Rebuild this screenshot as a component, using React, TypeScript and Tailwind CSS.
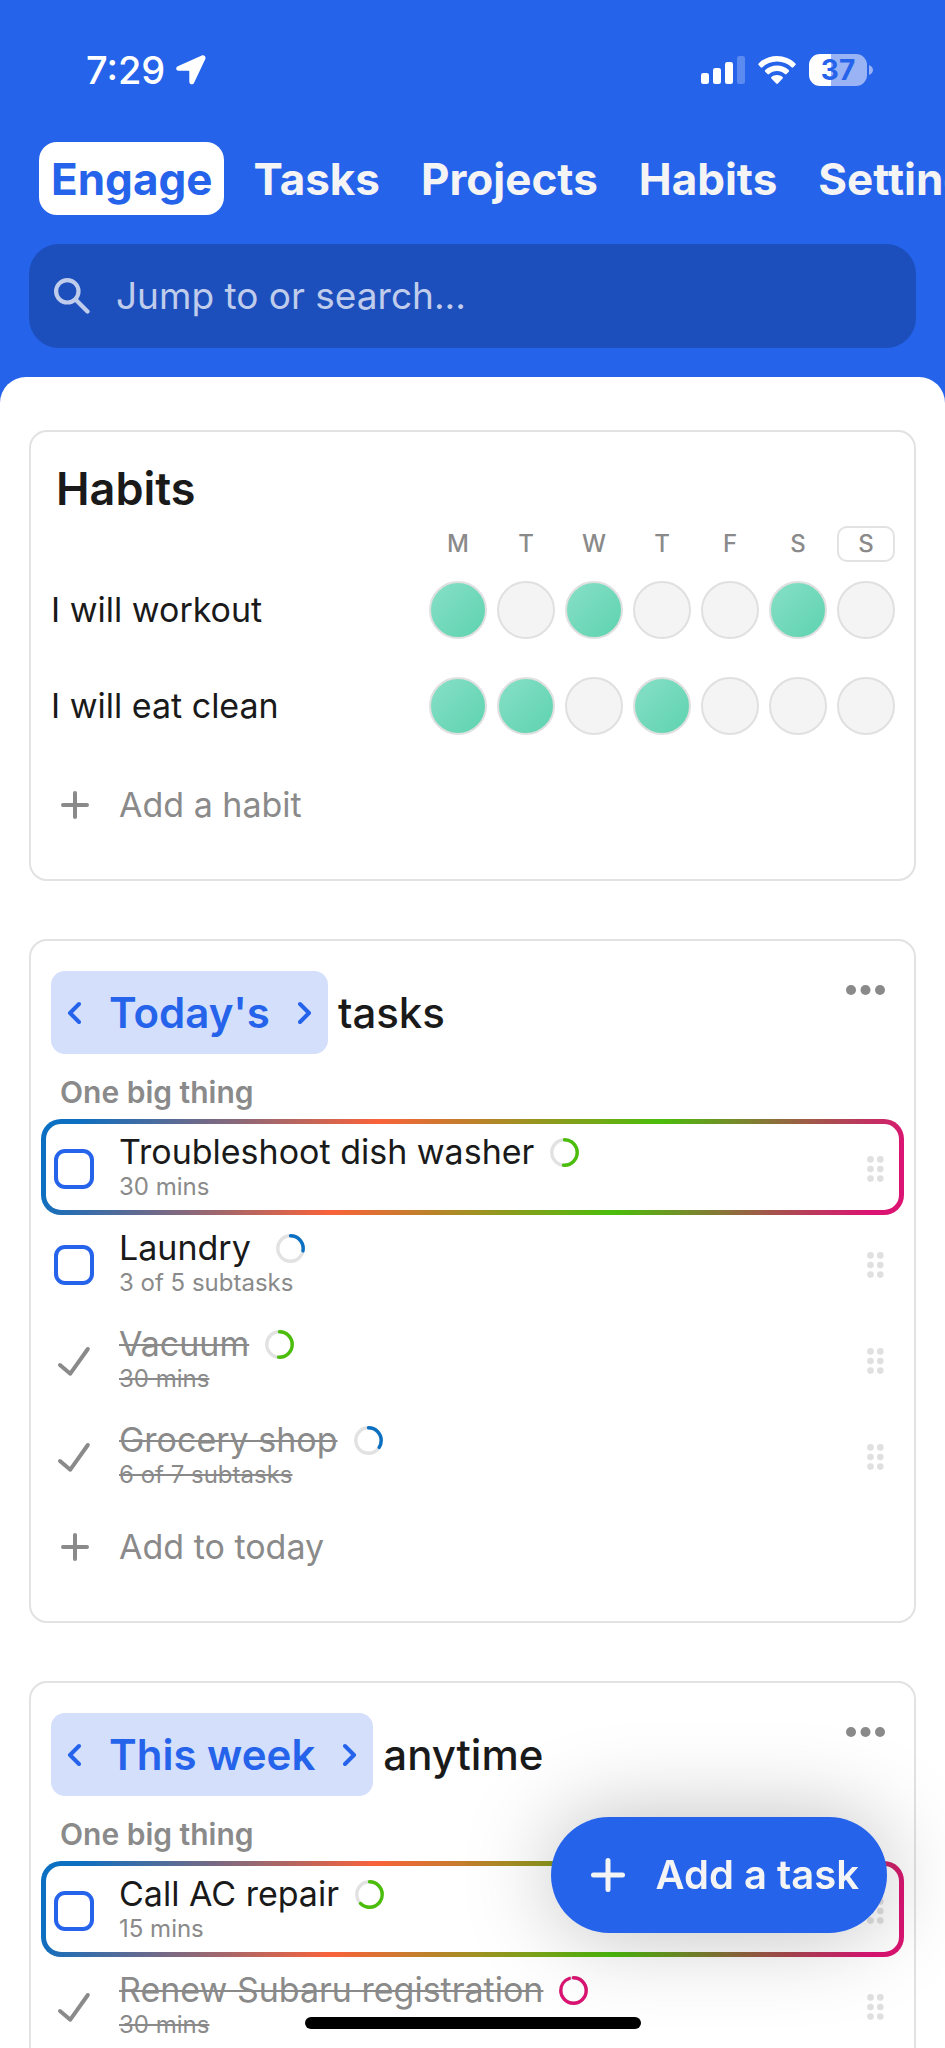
import { useId, useState } from "react";

type Task = {
  title: string;
  note: string;
  done?: boolean;
  progress: number;
  tone: "green" | "blue" | "pink";
};

type Habit = { name: string; days: boolean[] };

const NAV = ["Engage", "Tasks", "Projects", "Habits", "Settings"];
const DAYS = ["M", "T", "W", "T", "F", "S", "S"];
const TODAY_INDEX = 6;

const HABITS: Habit[] = [
  { name: "I will workout", days: [true, false, true, false, false, true, false] },
  { name: "I will eat clean", days: [true, true, false, true, false, false, false] },
];

const TODAY_TASKS: Task[] = [
  { title: "Troubleshoot dish washer", note: "30 mins", progress: 0.51, tone: "green" },
  { title: "Laundry ", note: "3 of 5 subtasks", progress: 0.28, tone: "blue" },
  { title: "Vacuum", note: "30 mins", done: true, progress: 0.51, tone: "green" },
  { title: "Grocery shop", note: "6 of 7 subtasks", done: true, progress: 0.34, tone: "blue" },
];

const WEEK_TASKS: Task[] = [
  { title: "Call AC repair", note: "15 mins", progress: 0.62, tone: "green" },
  { title: "Renew Subaru registration", note: "30 mins", done: true, progress: 0.94, tone: "pink" },
];

const RING_TONES = { green: "#4bbd0b", blue: "#0b6fc2", pink: "#db1473" };

function StatusBar() {
  return (
    <div className="flex h-10 items-center justify-between pr-[72px] pl-[86px] text-white">
      <div className="flex items-center gap-[11px]">
        <span className="text-[38px] leading-10 font-medium">7:29</span>
        <svg width="30" height="30" viewBox="0 0 30 30" fill="currentColor" aria-label="Location in use">
          <path d="M25.8 0.6L1.8 11.3C-0.7 12.5 -0.1 15.7 2.4 15.7H12.5C13 15.7 13.3 16 13.3 16.5V26.7C13.3 29.6 17 30.3 18.1 27.8L29.2 4.3C30.3 1.9 28.2 -0.5 25.8 0.6Z" />
        </svg>
      </div>
      <div className="flex items-center">
        <svg width="44" height="28" viewBox="0 0 44 28" fill="currentColor" aria-label="Signal">
          <rect x="0" y="17" width="8" height="11" rx="2.3" />
          <rect x="12" y="12" width="8" height="16" rx="2.3" />
          <rect x="24" y="6" width="8" height="22" rx="2.3" />
          <rect x="36" y="0" width="8" height="28" rx="2.3" opacity=".25" />
        </svg>
        <svg className="ml-[13px]" width="38" height="28" viewBox="0 0 38 28" fill="currentColor" aria-label="Wi-Fi">
          <path d="M19 0C11.8 0 5.3 2.8.6 7.4c-.5.5-.5 1.2 0 1.7l2.1 2.2c.5.5 1.2.5 1.7 0C8.2 7.7 13.3 5.6 19 5.6s10.8 2.1 14.6 5.7c.5.5 1.2.5 1.7 0l2.1-2.2c.5-.5.5-1.2 0-1.7C32.7 2.8 26.2 0 19 0Z" />
          <path d="M19 9.5c-4.5 0-8.6 1.7-11.7 4.5-.5.5-.5 1.2-.1 1.7l2.3 2.3c.5.5 1.1.5 1.6.1 2.1-1.9 4.9-3 7.9-3s5.8 1.1 7.9 3c.5.4 1.1.4 1.6-.1l2.3-2.3c.4-.5.4-1.2-.1-1.7-3.1-2.8-7.2-4.5-11.7-4.5Z" />
          <path d="M19 19c-2.1 0-4 .7-5.5 1.9-.5.4-.5 1.1-.1 1.6l4.8 5c.5.5 1.2.5 1.7 0l4.7-5c.5-.5.4-1.2-.1-1.6C23 19.700 21.1 19 19 19Z" />
        </svg>
        <div className="ml-[13px] flex h-8 w-[58px] items-center justify-center rounded-[11px] bg-[linear-gradient(90deg,#fff_0_38%,#9ab3f5_38%)] text-[28px] leading-8 font-bold text-[#2563eb]">
          37
        </div>
        <svg className="ml-[2px]" width="4" height="10" viewBox="0 0 4 10" fill="#9ab3f5" aria-hidden="true">
          <path d="M0 0c2.500 1 4 2.800 4 5s-1.500 4-4 5Z" />
        </svg>
      </div>
    </div>
  );
}

function PlusIcon({ size, stroke }: { size: number; stroke: number }) {
  return (
    <svg width={size} height={size} viewBox={`0 0 ${size} ${size}`} stroke="currentColor" strokeWidth={stroke} strokeLinecap="round" aria-hidden="true">
      <path d={`M${size / 2} ${stroke / 2}V${size - stroke / 2}M${stroke / 2} ${size / 2}H${size - stroke / 2}`} />
    </svg>
  );
}

function Chevron({ direction }: { direction: "left" | "right" }) {
  return (
    <svg width="14" height="24" viewBox="0 0 14 24" fill="none" stroke="currentColor" strokeWidth="4" strokeLinecap="round" strokeLinejoin="round" aria-hidden="true">
      <path d={direction === "left" ? "M12 3 3 12l9 9" : "m2 3 9 9-9 9"} />
    </svg>
  );
}

function Ring({ progress, tone }: { progress: number; tone: Task["tone"] }) {
  const length = 2 * Math.PI * 12.7;
  return (
    <svg className="shrink-0" width="29" height="29" viewBox="0 0 29 29" fill="none" strokeWidth="3.4" aria-hidden="true">
      <circle cx="14.5" cy="14.5" r="12.7" stroke="#e2e2e2" />
      <circle
        cx="14.5"
        cy="14.5"
        r="12.7"
        stroke={RING_TONES[tone]}
        strokeLinecap="round"
        strokeDasharray={`${length * progress} ${length}`}
        transform="rotate(-90 14.5 14.5)"
      />
    </svg>
  );
}

function DragHandle() {
  return (
    <svg width="17" height="26" viewBox="0 0 17 26" fill="#e0e0e0" aria-hidden="true">
      {[3.4, 13, 22.6].map((y) => (
        <g key={y}>
          <circle cx="3.5" cy={y} r="3.3" />
          <circle cx="13.3" cy={y} r="3.3" />
        </g>
      ))}
    </svg>
  );
}

function AddRow({ label }: { label: string }) {
  return (
    <button type="button" className="flex h-[88px] w-full items-center gap-[30px] pl-[30px] text-[34px] leading-10 text-[#8a8a8a]">
      <PlusIcon size={28} stroke={4} />
      {label}
    </button>
  );
}

function HabitsCard() {
  const [habits, setHabits] = useState(HABITS);
  const toggle = (row: number, day: number) =>
    setHabits((all) =>
      all.map((h, i) => (i === row ? { ...h, days: h.days.map((d, j) => (j === day ? !d : d)) } : h)),
    );
  return (
    <section className="rounded-[18px] border-2 border-[#e2e2e2] bg-white pt-6 pb-[30px]">
      <h2 className="mb-1 pl-[25px] text-[45px] leading-[66px] font-semibold">Habits</h2>
      <div className="mb-[7px] pr-[14px] pl-5">
        <table className="w-full table-fixed border-collapse">
          <thead>
            <tr className="h-[35px]">
              <td className="p-0" />
              {DAYS.map((day, i) => (
                <th key={i} scope="col" className="w-[68px] p-0 text-2xl font-medium text-[#8a8a8a]">
                  <span
                    className={
                      i === TODAY_INDEX
                        ? "mx-auto flex h-9 w-[58px] items-center justify-center rounded-[10px] border-2 border-[#e2e2e2]"
                        : "flex h-9 items-center justify-center"
                    }
                  >
                    {day}
                  </span>
                </th>
              ))}
            </tr>
          </thead>
          <tbody>
            {habits.map((habit, row) => (
              <tr key={habit.name} className="h-24">
                <th scope="row" className="p-0 text-left text-[34px] leading-10 font-normal">
                  {habit.name}
                </th>
                {habit.days.map((on, day) => (
                  <td key={day} className="p-0">
                    <input
                      type="checkbox"
                      checked={on}
                      onChange={() => toggle(row, day)}
                      aria-label={`${habit.name}, day ${day + 1}`}
                      className="mx-auto block size-[58px] appearance-none rounded-full border-2 border-[#e0e0e0] bg-[#f4f4f4] checked:bg-linear-to-br checked:from-[#86dfc6] checked:to-[#5dd3b0]"
                    />
                  </td>
                ))}
              </tr>
            ))}
          </tbody>
        </table>
      </div>
      <AddRow label="Add a habit" />
    </section>
  );
}

function TaskRow({ task, featured }: { task: Task; featured?: boolean }) {
  const id = useId();
  const [done, setDone] = useState(!!task.done);
  return (
    <li
      className={
        featured
          ? "h-24 rounded-[20px] bg-[linear-gradient(117deg,#0b6fc2_4%,#f9623a_37%,#4bbd0b_68%,#db1473_96%)] p-[5px]"
          : "h-24 p-[5px]"
      }
    >
      <div className="flex h-full items-center rounded-[15px] bg-white pt-[3px] pr-[15px] pl-2">
        <span className="grid size-10 shrink-0 place-items-center">
          <input
            id={id}
            type="checkbox"
            checked={done}
            onChange={() => setDone(!done)}
            className="col-start-1 row-start-1 size-10 appearance-none rounded-[11px] border-4 border-[#2563eb] checked:border-transparent"
          />
          {done && (
            <svg className="pointer-events-none col-start-1 row-start-1" width="40" height="40" viewBox="0 0 40 40" fill="none" stroke="#8a8a8a" strokeWidth="4" strokeLinecap="round" strokeLinejoin="round" aria-hidden="true">
              <path d="M6 24L16.3 32.7L33.8 8" />
            </svg>
          )}
        </span>
        <label htmlFor={id} className="ml-[25px] min-w-0 flex-1 pb-[3px]">
          <span className="flex items-center gap-4">
            <span
              className={
                done
                  ? "text-[34px] leading-10 whitespace-pre text-[#8a8a8a] line-through decoration-2"
                  : "text-[34px] leading-10 whitespace-pre"
              }
            >
              {task.title}
            </span>
            <Ring progress={task.progress} tone={task.tone} />
          </span>
          <span
            className={
              done
                ? "block text-2xl leading-[30px] text-[#8a8a8a] line-through decoration-2"
                : "block text-2xl leading-[30px] text-[#8a8a8a]"
            }
          >
            {task.note}
          </span>
        </label>
        <DragHandle />
      </div>
    </li>
  );
}

function TasksCard({ period, kind, tasks, addLabel }: { period: string; kind: string; tasks: Task[]; addLabel: string }) {
  return (
    <section className="rounded-[18px] border-2 border-[#e2e2e2] bg-white pt-[30px] pb-[30px]">
      <header className="flex items-start pr-7 pl-5">
        <h2 className="flex items-center gap-[10px] text-[42px] leading-[50px] font-medium">
          <span className="flex h-[83px] items-center rounded-[14px] bg-[#d4dffc] px-4 font-semibold text-[#2563eb]">
            <button type="button" aria-label="Previous period">
              <Chevron direction="left" />
            </button>
            <span className="px-7">{period}</span>
            <button type="button" aria-label="Next period">
              <Chevron direction="right" />
            </button>
          </span>
          {kind}
        </h2>
        <button type="button" aria-label="More options" className="mt-[14px] ml-auto">
          <svg width="40" height="10" viewBox="0 0 40 10" fill="#8a8a8a" aria-hidden="true">
            <circle cx="5" cy="5" r="5" />
            <circle cx="19.5" cy="5" r="5" />
            <circle cx="34" cy="5" r="5" />
          </svg>
        </button>
      </header>
      <h3 className="mt-5 mb-[9px] pl-[29px] text-[30px] leading-9 font-semibold text-[#8a8a8a]">One big thing</h3>
      <ul className="px-[10px]">
        {tasks.map((task, i) => (
          <TaskRow key={task.title} task={task} featured={i === 0} />
        ))}
      </ul>
      <AddRow label={addLabel} />
    </section>
  );
}

export default function App() {
  const [active, setActive] = useState("Engage");
  return (
    <div className="flex h-screen flex-col overflow-hidden bg-[#2563eb] font-[Inter,sans-serif] text-[#1a1a1a]">
      <header className="shrink-0 pt-[50px] pb-[29px]">
        <StatusBar />
        <nav className="mt-[52px] flex gap-[17px] overflow-hidden pl-[39px]">
          {NAV.map((item) => (
            <a
              key={item}
              href={`#${item.toLowerCase()}`}
              onClick={() => setActive(item)}
              className={
                item === active
                  ? "flex h-[73px] shrink-0 items-center rounded-[18px] bg-white px-3 text-[44px] leading-[50px] font-bold text-[#2563eb]"
                  : "flex h-[73px] shrink-0 items-center rounded-[18px] px-3 text-[44px] leading-[50px] font-bold text-[#f4f4f4]"
              }
            >
              {item}
            </a>
          ))}
        </nav>
        <label className="mx-[29px] mt-[29px] flex h-[104px] items-center gap-[26px] rounded-[30px] bg-[#1d4fbc] pl-[25px] text-[#c0cceb]">
          <svg className="shrink-0" width="36" height="36" viewBox="0 0 36 36" fill="none" stroke="currentColor" strokeWidth="4.2" strokeLinecap="round" aria-hidden="true">
            <circle cx="13.3" cy="13.3" r="11.2" />
            <path d="M21.5 21.5L33.5 33.5" />
          </svg>
          <input
            type="search"
            aria-label="Search"
            placeholder="Jump to or search..."
            className="min-w-0 flex-1 bg-transparent text-[37px] leading-[50px] outline-none placeholder:text-[#c0cceb]"
          />
        </label>
      </header>

      <main className="flex min-h-0 flex-1 flex-col gap-[58px] overflow-y-auto rounded-t-[26px] bg-white px-[29px] pt-[53px] [scrollbar-width:none] *:shrink-0">
        <HabitsCard />
        <TasksCard period="Today's" kind="tasks" tasks={TODAY_TASKS} addLabel="Add to today" />
        <TasksCard period="This week" kind="anytime" tasks={WEEK_TASKS} addLabel="Add to this week" />
      </main>

      <button
        type="button"
        className="fixed right-[58px] bottom-[115px] flex h-[116px] items-center gap-[30px] rounded-full bg-[#2563eb] pr-7 pl-10 text-[40px] leading-[50px] font-semibold text-[#f4f4f4] shadow-[0_0_90px_rgba(0,0,0,0.26)]"
      >
        <PlusIcon size={34} stroke={5} />
        Add a task
      </button>
      <div className="fixed bottom-[19px] left-1/2 h-3 w-[336px] -translate-x-1/2 rounded-full bg-black" />
    </div>
  );
}
